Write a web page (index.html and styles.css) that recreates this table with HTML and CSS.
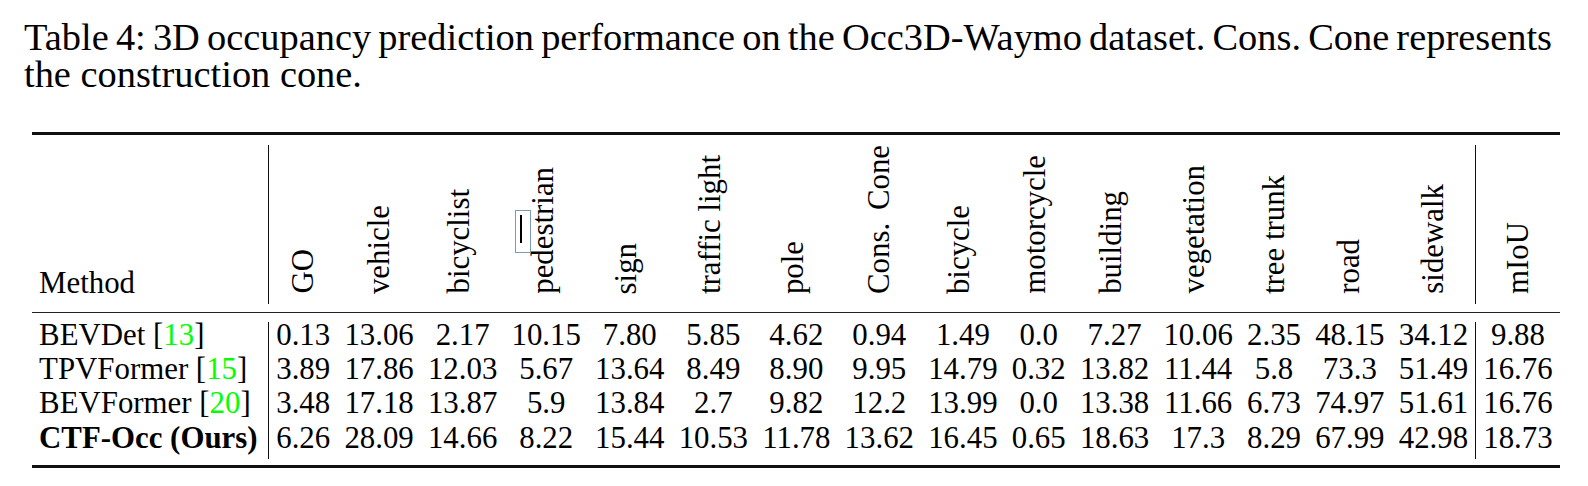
FILE: index.html
```html
<!DOCTYPE html>
<html lang="en">
<head>
<meta charset="utf-8">
<title>Table 4</title>
<link rel="stylesheet" href="styles.css">
</head>
<body>
<div class="page">
  <p class="caption"><span class="cap-l1">Table 4: 3D occupancy prediction performance on the Occ3D-Waymo dataset. Cons. Cone represents</span> the construction cone.</p>
  <table class="tbl">
    <thead>
      <tr class="gap gap-top"><td colspan="17"></td></tr>
      <tr class="hdr">
        <th class="m">Method</th>
        <th class="vl"><div class="rw"><span class="rot">GO</span></div></th>
        <th><div class="rw"><span class="rot">vehicle</span></div></th>
        <th><div class="rw"><span class="rot d">bicyclist</span></div></th>
        <th class="ped"><div class="rw"><span class="rot d">pedestrian</span></div><span class="lnk"></span></th>
        <th><div class="rw"><span class="rot d">sign</span></div></th>
        <th><div class="rw"><span class="rot d">traffic light</span></div></th>
        <th><div class="rw"><span class="rot d">pole</span></div></th>
        <th><div class="rw"><span class="rot wide">Cons. Cone</span></div></th>
        <th><div class="rw"><span class="rot d">bicycle</span></div></th>
        <th><div class="rw"><span class="rot d">motorcycle</span></div></th>
        <th><div class="rw"><span class="rot d">building</span></div></th>
        <th><div class="rw"><span class="rot d">vegetation</span></div></th>
        <th><div class="rw"><span class="rot">tree trunk</span></div></th>
        <th><div class="rw"><span class="rot">road</span></div></th>
        <th><div class="rw"><span class="rot">sidewalk</span></div></th>
        <th class="vl"><div class="rw"><span class="rot">mIoU</span></div></th>
      </tr>
      <tr class="gap gap-mid"><td colspan="17"></td></tr>
    </thead>
    <tbody>
      <tr class="gap gap-body"><td colspan="17"></td></tr>
      <tr class="row">
        <td class="m">BEVDet [<span class="cite">13</span>]</td>
        <td class="vl">0.13</td><td>13.06</td><td>2.17</td><td>10.15</td><td>7.80</td><td>5.85</td><td>4.62</td><td>0.94</td><td>1.49</td><td>0.0</td><td>7.27</td><td>10.06</td><td>2.35</td><td>48.15</td><td>34.12</td>
        <td class="vl">9.88</td>
      </tr>
      <tr class="row">
        <td class="m">TPVFormer [<span class="cite">15</span>]</td>
        <td class="vl">3.89</td><td>17.86</td><td>12.03</td><td>5.67</td><td>13.64</td><td>8.49</td><td>8.90</td><td>9.95</td><td>14.79</td><td>0.32</td><td>13.82</td><td>11.44</td><td>5.8</td><td>73.3</td><td>51.49</td>
        <td class="vl">16.76</td>
      </tr>
      <tr class="row">
        <td class="m">BEVFormer [<span class="cite">20</span>]</td>
        <td class="vl">3.48</td><td>17.18</td><td>13.87</td><td>5.9</td><td>13.84</td><td>2.7</td><td>9.82</td><td>12.2</td><td>13.99</td><td>0.0</td><td>13.38</td><td>11.66</td><td>6.73</td><td>74.97</td><td>51.61</td>
        <td class="vl">16.76</td>
      </tr>
      <tr class="row">
        <td class="m b">CTF-Occ (Ours)</td>
        <td class="vl">6.26</td><td>28.09</td><td>14.66</td><td>8.22</td><td>15.44</td><td>10.53</td><td>11.78</td><td>13.62</td><td>16.45</td><td>0.65</td><td>18.63</td><td>17.3</td><td>8.29</td><td>67.99</td><td>42.98</td>
        <td class="vl">18.73</td>
      </tr>
      <tr class="gap gap-bot"><td colspan="17"></td></tr>
    </tbody>
  </table>
</div>
</body>
</html>
```

FILE: styles.css
```css
html, body {
  margin: 0;
  padding: 0;
  background: #ffffff;
  color: #000000;
  font-family: "Liberation Serif", "Times New Roman", serif;
}

.page {
  padding-top: 19px;
}

.caption {
  margin: 0 0 0 24px;
  width: 1528px;
  font-size: 38.4px;
  line-height: 36.5px;
  text-align: justify;
}
.cap-l1 {
  word-spacing: -3.4px;
}

.tbl {
  margin: 40px 0 0 32px;
  border-collapse: separate;
  border-spacing: 0;
  font-size: 30.85px;
}

.tbl td,
.tbl th {
  padding: 0 7.08px;
  white-space: nowrap;
  font-weight: normal;
}

/* booktabs-like rules with gaps */
.tbl .gap td {
  padding: 0;
}
.gap-top { height: 13px; }
.gap-top td { border-top: 3px solid #111; }
.gap-mid { height: 8.3px; }
.gap-mid td { border-bottom: 1px solid #222; }
.gap-body { height: 9px; }
.gap-bot { height: 8.7px; }
.gap-bot td { border-bottom: 3px solid #111; }

/* header */
.hdr { height: 157.7px; }
.tbl .hdr th {
  vertical-align: bottom;
  padding-bottom: 10.3px;
}
.tbl .hdr th.m {
  text-align: left;
  line-height: 34.4px;
  padding-bottom: 3.5px;
}
.m { width: 222px; }

.rw {
  display: flex;
  justify-content: center;
  align-items: flex-end;
}
.rot {
  writing-mode: vertical-rl;
  transform: rotate(180deg);
  line-height: 1;
  white-space: nowrap;
}
.rot.d { margin-right: 6.5px; }
.rot.wide { word-spacing: 5px; }

.tbl .vl { border-left: 1px solid #111; }

/* stray link annotation box over the pedestrian header */
.ped { position: relative; }
.lnk {
  position: absolute;
  left: 11px;
  top: 65px;
  width: 16px;
  height: 43px;
  box-sizing: border-box;
  border: 1px solid #7b9ab4;
}
.lnk::after {
  content: "";
  position: absolute;
  left: 4px;
  top: 4px;
  width: 1.5px;
  height: 28px;
  background: #000;
}

/* body rows */
.row { height: 34.4px; }
.tbl .row td {
  line-height: 27.4px;
  padding-bottom: 7px;
  text-align: center;
  vertical-align: top;
}
.tbl .row td.m { text-align: left; }
.tbl .row td.b { font-weight: bold; }
.cite { color: #00ff00; }
```
